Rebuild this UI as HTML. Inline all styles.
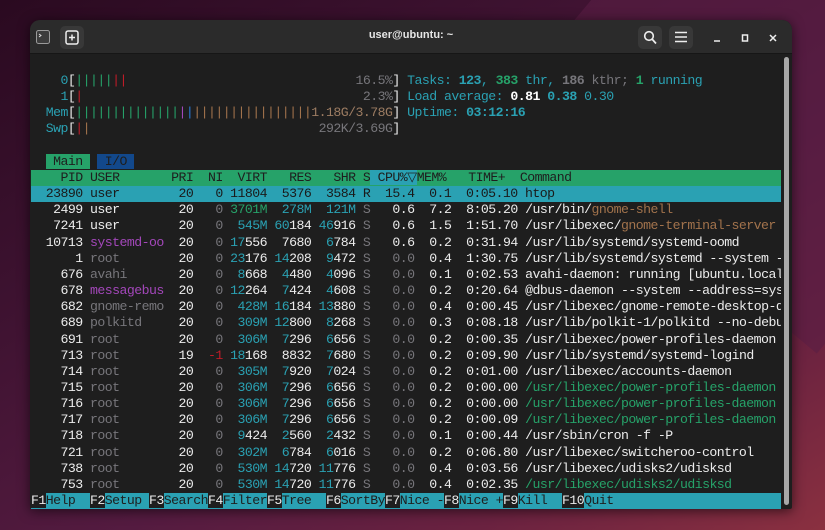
<!DOCTYPE html>
<html><head><meta charset="utf-8"><style>
*{margin:0;padding:0;box-sizing:border-box}
body{width:825px;height:530px;overflow:hidden;position:relative;
background:linear-gradient(150deg,#2a0a20 0%,#3d1230 30%,#541b40 60%,#6a2240 80%,#8a3040 100%);}
.sh{position:absolute;left:560px;top:-40px;width:400px;height:300px;background:#5a1e45;transform:rotate(40deg);opacity:.6}
.win{position:absolute;left:30px;top:20px;width:762px;height:489px;background:#1e1e1e;border-radius:10px 10px 2px 2px;overflow:hidden;box-shadow:0 2px 12px rgba(0,0,0,.6)}
.tb{position:absolute;left:0;top:0;width:762px;height:34px;background:#2b2b2b;border-bottom:1px solid #161616}
.title{position:absolute;left:0;width:762px;top:9px;text-align:center;color:#e6e6e6;font:bold 11px "Liberation Sans",sans-serif}
.btn{position:absolute;top:6px;width:24px;height:23px;background:#383838;border-radius:5px}
.sb{position:absolute;left:754px;top:37px;width:5px;height:448px;background:#a8a8a8;border-radius:3px}
.t{position:absolute;left:31px;top:73px;font-family:"Liberation Mono",monospace;font-size:13.2px;letter-spacing:-0.54px;line-height:16.17px;color:#ececec;white-space:normal}
.t div{width:750px;height:16.17px;overflow:hidden;white-space:pre}
.c{color:#2aa1b3}.g{color:#26a269}.m{color:#a347ba}.r{color:#c01c28}.y{color:#a2734c}.d{color:#77767b}.b{font-weight:bold}
.bl{color:#2a7bd8}.w{color:#fff}
.hd{background:#26a269;color:#1e1e1e}
.so{background:#2aa1b3}
.sel{background:#2aa1b3;color:#1a1a1a}
.fk{background:#2aa1b3;color:#1e1e1e}
.fk i{font-style:normal;background:#1e1e1e;color:#ececec}
.tm{background:#26a269;color:#1e1e1e}.ti{background:#12488b;color:#1e1e1e}
</style></head><body>
<div class="sh"></div>
<div class="win">
<div class="tb">
<svg style="position:absolute;left:6px;top:10px" width="14" height="14" viewBox="0 0 14 14"><rect x="0.5" y="0.5" width="13" height="13" rx="2" fill="#3c3c3c" stroke="#9a9a9a"/><path d="M3 4l2 1.5L3 7" stroke="#ddd" fill="none" stroke-width="1"/></svg>
<div class="btn" style="left:30px"></div>
<svg style="position:absolute;left:35px;top:10px" width="14" height="15" viewBox="0 0 14 15"><rect x="1" y="1" width="12" height="13" rx="2" fill="none" stroke="#eee" stroke-width="1.5"/><path d="M7 4.5v6M4 7.5h6" stroke="#eee" stroke-width="1.5"/></svg>
<div class="title">user@ubuntu: ~</div>
<div class="btn" style="left:608px"></div>
<svg style="position:absolute;left:613px;top:10px" width="14" height="15" viewBox="0 0 14 15"><circle cx="6" cy="6" r="4.3" fill="none" stroke="#eee" stroke-width="1.6"/><path d="M9 9l4 4.5" stroke="#eee" stroke-width="1.7"/></svg>
<div class="btn" style="left:639px"></div>
<svg style="position:absolute;left:644px;top:11px" width="14" height="12" viewBox="0 0 14 12"><path d="M1 1.5h12M1 6h12M1 10.5h12" stroke="#eee" stroke-width="1.6"/></svg>
<svg style="position:absolute;left:682px;top:13px" width="10" height="10" viewBox="0 0 10 10"><path d="M2 8h6" stroke="#eee" stroke-width="1.5"/></svg>
<svg style="position:absolute;left:710px;top:13px" width="10" height="10" viewBox="0 0 10 10"><rect x="2.5" y="2" width="5" height="6" fill="none" stroke="#eee" stroke-width="1.5"/></svg>
<svg style="position:absolute;left:738px;top:13px" width="10" height="10" viewBox="0 0 10 10"><path d="M2 2l6 6M8 2l-6 6" stroke="#eee" stroke-width="1.5"/></svg>
</div>
<div class="sb"></div>
</div>
<div class="t">
<div><span class="c">    0</span>[<span class="g">|||||</span><span class="r">||</span>                               <span class="d">16.5%</span>] <span class="c">Tasks: </span><span class="c b">123</span><span class="c">, </span><span class="g b">383</span><span class="c"> thr, </span><span class="d b">186</span><span class="d"> kthr; </span><span class="g b">1</span><span class="c"> running</span></div>
<div><span class="c">    1</span>[<span class="r">|</span>                                      <span class="d">2.3%</span>] <span class="c">Load average: </span><span class="w b">0.81</span> <span class="c b">0.38</span> <span class="c">0.30</span></div>
<div><span class="c">  Mem</span>[<span class="g">||||||||||||||</span><span class="m">|</span><span class="bl">|</span><span class="y">||||||||||||||||</span><span style="color:#9c7c62">1.18G/3.78G</span>] <span class="c">Uptime: </span><span class="c b">03:12:16</span></div>
<div><span class="c">  Swp</span>[<span class="r">|</span><span class="y">|</span>                               <span class="d">292K/3.69G</span>]</div>
<div> </div>
<div>  <span class="tm"> Main </span> <span class="ti"> I/O </span></div>
<div class="hd">    PID USER       PRI  NI  VIRT   RES   SHR S<span class="so"> CPU%▽</span>MEM%   TIME+  Command</div>
<div class="sel">  23890 user        20   0 11804  5376  3584 R  15.4  0.1  0:05.10 htop</div>
<div>   2499 user        20   <span class="d">0</span> <span class="g">3701M</span>  <span class="c">278M</span>  <span class="c">121M</span> <span class="d">S</span>   0.6  7.2  8:05.20 /usr/bin/<span class="y">gnome-shell</span></div>
<div>   7241 user        20   <span class="d">0</span>  <span class="c">545M</span> <span class="c">60</span>184 <span class="c">46</span>916 <span class="d">S</span>   0.6  1.5  1:51.70 /usr/libexec/<span class="y">gnome-terminal-server</span></div>
<div>  10713 <span class="m">systemd-oo</span>  20   <span class="d">0</span> <span class="c">17</span>556  7680  <span class="c">6</span>784 <span class="d">S</span>   0.6  0.2  0:31.94 /usr/lib/systemd/systemd-oomd</div>
<div>      1 <span class="d">root</span>        20   <span class="d">0</span> <span class="c">23</span>176 <span class="c">14</span>208  <span class="c">9</span>472 <span class="d">S</span>   <span class="d">0.0</span>  0.4  1:30.75 /usr/lib/systemd/systemd --system --deserialize</div>
<div>    676 <span class="d">avahi</span>       20   <span class="d">0</span>  <span class="c">8</span>668  <span class="c">4</span>480  <span class="c">4</span>096 <span class="d">S</span>   <span class="d">0.0</span>  0.1  0:02.53 avahi-daemon: running [ubuntu.local]</div>
<div>    678 <span class="m">messagebus</span>  20   <span class="d">0</span> <span class="c">12</span>264  <span class="c">7</span>424  <span class="c">4</span>608 <span class="d">S</span>   <span class="d">0.0</span>  0.2  0:20.64 @dbus-daemon --system --address=systemd:</div>
<div>    682 <span class="d">gnome-remo</span>  20   <span class="d">0</span>  <span class="c">428M</span> <span class="c">16</span>184 <span class="c">13</span>880 <span class="d">S</span>   <span class="d">0.0</span>  0.4  0:00.45 /usr/libexec/gnome-remote-desktop-daemon</div>
<div>    689 <span class="d">polkitd</span>     20   <span class="d">0</span>  <span class="c">309M</span> <span class="c">12</span>800  <span class="c">8</span>268 <span class="d">S</span>   <span class="d">0.0</span>  0.3  0:08.18 /usr/lib/polkit-1/polkitd --no-debug</div>
<div>    691 <span class="d">root</span>        20   <span class="d">0</span>  <span class="c">306M</span>  <span class="c">7</span>296  <span class="c">6</span>656 <span class="d">S</span>   <span class="d">0.0</span>  0.2  0:00.35 /usr/libexec/power-profiles-daemon</div>
<div>    713 <span class="d">root</span>        19  <span class="r">-1</span> <span class="c">18</span>168  8832  <span class="c">7</span>680 <span class="d">S</span>   <span class="d">0.0</span>  0.2  0:09.90 /usr/lib/systemd/systemd-logind</div>
<div>    714 <span class="d">root</span>        20   <span class="d">0</span>  <span class="c">305M</span>  <span class="c">7</span>920  <span class="c">7</span>024 <span class="d">S</span>   <span class="d">0.0</span>  0.2  0:01.00 /usr/libexec/accounts-daemon</div>
<div>    715 <span class="d">root</span>        20   <span class="d">0</span>  <span class="c">306M</span>  <span class="c">7</span>296  <span class="c">6</span>656 <span class="d">S</span>   <span class="d">0.0</span>  0.2  0:00.00 <span class="g">/usr/libexec/power-profiles-daemon</span></div>
<div>    716 <span class="d">root</span>        20   <span class="d">0</span>  <span class="c">306M</span>  <span class="c">7</span>296  <span class="c">6</span>656 <span class="d">S</span>   <span class="d">0.0</span>  0.2  0:00.00 <span class="g">/usr/libexec/power-profiles-daemon</span></div>
<div>    717 <span class="d">root</span>        20   <span class="d">0</span>  <span class="c">306M</span>  <span class="c">7</span>296  <span class="c">6</span>656 <span class="d">S</span>   <span class="d">0.0</span>  0.2  0:00.09 <span class="g">/usr/libexec/power-profiles-daemon</span></div>
<div>    718 <span class="d">root</span>        20   <span class="d">0</span>  <span class="c">9</span>424  <span class="c">2</span>560  <span class="c">2</span>432 <span class="d">S</span>   <span class="d">0.0</span>  0.1  0:00.44 /usr/sbin/cron -f -P</div>
<div>    721 <span class="d">root</span>        20   <span class="d">0</span>  <span class="c">302M</span>  <span class="c">6</span>784  <span class="c">6</span>016 <span class="d">S</span>   <span class="d">0.0</span>  0.2  0:06.80 /usr/libexec/switcheroo-control</div>
<div>    738 <span class="d">root</span>        20   <span class="d">0</span>  <span class="c">530M</span> <span class="c">14</span>720 <span class="c">11</span>776 <span class="d">S</span>   <span class="d">0.0</span>  0.4  0:03.56 /usr/libexec/udisks2/udisksd</div>
<div>    753 <span class="d">root</span>        20   <span class="d">0</span>  <span class="c">530M</span> <span class="c">14</span>720 <span class="c">11</span>776 <span class="d">S</span>   <span class="d">0.0</span>  0.4  0:02.35 <span class="g">/usr/libexec/udisks2/udisksd</span></div>
<div class="fk"><i>F1</i>Help  <i>F2</i>Setup <i>F3</i>Search<i>F4</i>Filter<i>F5</i>Tree  <i>F6</i>SortBy<i>F7</i>Nice -<i>F8</i>Nice +<i>F9</i>Kill  <i>F10</i>Quit</div>
</div>
</body></html>
